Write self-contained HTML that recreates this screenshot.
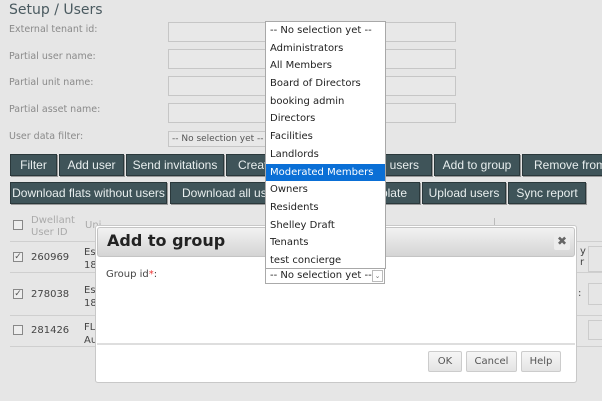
<!DOCTYPE html>
<html><head><style>
*{box-sizing:border-box;margin:0;padding:0}
body{width:602px;height:401px;overflow:hidden;background:#e6e6e6;font-family:"DejaVu Sans","Liberation Sans",sans-serif;position:relative}
.a{position:absolute}
.lbl{position:absolute;left:9px;font-size:9.5px;color:#8a8a8a}
.inp{position:absolute;left:168px;width:288px;height:20px;border:1px solid #c6c6c6;background:#e8e8e8}
.btn{position:absolute;height:22px;background:#3f5459;color:#e8eeee;font-size:12px;line-height:21px;text-align:center;border:1px solid #2a383b;box-shadow:1px 1px 0 #999;font-family:"Liberation Sans",sans-serif;white-space:nowrap;overflow:hidden}
.dd{position:absolute;left:265px;top:21px;width:121px;height:248px;background:#fff;border:1px solid #a8a8a8;font-size:10px;color:#222}
.dd div{height:17.7px;line-height:17.7px;padding-left:4px;white-space:nowrap;overflow:hidden}
.dd .sel{background:#0a6fd6;color:#fff}
.line{position:absolute;left:10px;width:592px;height:1px;background:#cfcfcf}
.cb{position:absolute;left:13px;width:10px;height:10px;border:1px solid #888;background:#eee;font-size:9px;line-height:8px;text-align:center;color:#555}
.td{position:absolute;left:31px;font-size:10px;color:#444}
.dbtn{position:absolute;top:351px;height:21px;border:1px solid #ccc;border-radius:2px;background:linear-gradient(#f6f6f6,#e4e4e4);font-size:10px;color:#555;text-align:center;line-height:19px}
</style></head><body>
<div class="a" style="left:9px;top:2px;font-size:14px;color:#4a5a60">Setup / Users</div>
<div class="lbl" style="top:24px">External tenant id:</div>
<div class="lbl" style="top:51px">Partial user name:</div>
<div class="lbl" style="top:77px">Partial unit name:</div>
<div class="lbl" style="top:104px">Partial asset name:</div>
<div class="lbl" style="top:131px">User data filter:</div>
<div class="inp" style="top:22px"></div>
<div class="inp" style="top:49px"></div>
<div class="inp" style="top:76px"></div>
<div class="inp" style="top:103px"></div>
<div class="inp" style="top:131px;height:16px;width:100px;font-size:9px;color:#555;padding-left:3px;line-height:14px;white-space:nowrap;overflow:hidden">-- No selection yet --</div>

<div class="btn" style="left:10px;top:154px;width:47px">Filter</div>
<div class="btn" style="left:59px;top:154px;width:65px">Add user</div>
<div class="btn" style="left:126px;top:154px;width:98px">Send invitations</div>
<div class="btn" style="left:226px;top:154px;width:80px;text-align:left;padding-left:11px">Create</div>
<div class="btn" style="left:330px;top:154px;width:102px;text-align:right;padding-right:12px">e users</div>
<div class="btn" style="left:434px;top:154px;width:86px">Add to group</div>
<div class="btn" style="left:522px;top:154px;width:90px;text-align:left;padding-left:11px">Remove from g</div>

<div class="btn" style="left:10px;top:182px;width:157px">Download flats without users</div>
<div class="btn" style="left:170px;top:182px;width:100px;text-align:left;padding-left:11px">Download all users</div>
<div class="btn" style="left:360px;top:182px;width:60px;text-align:right;padding-right:12px">plate</div>
<div class="btn" style="left:422px;top:182px;width:84px">Upload users</div>
<div class="btn" style="left:508px;top:182px;width:78px">Sync report</div>

<div class="cb" style="top:220px"></div>
<div class="td" style="left:31px;top:215px;color:#aaa;line-height:12px">Dwellant<br>User ID</div>
<div class="a" style="left:85px;top:220px;font-size:10px;color:#aaa">Uni</div>
<div class="line" style="top:241px"></div>
<div class="cb" style="top:252px">✓</div><div class="td" style="top:252px">260969</div>
<div class="a" style="left:84px;top:246px;font-size:10px;color:#444;line-height:13px">Es<br>18</div>
<div class="line" style="top:272px"></div>
<div class="cb" style="top:289px">✓</div><div class="td" style="top:289px">278038</div>
<div class="a" style="left:84px;top:284px;font-size:10px;color:#444;line-height:13px">Es<br>18</div>
<div class="line" style="top:315px"></div>
<div class="cb" style="top:325px"></div><div class="td" style="top:325px">281426</div>
<div class="a" style="left:84px;top:321px;font-size:10px;color:#444;line-height:13px">FL<br>Au</div>
<div class="line" style="top:346px"></div>
<div class="a" style="left:580px;top:246px;font-size:10px;color:#444;line-height:11px">y<br>r</div>
<div class="a" style="left:578px;top:288px;font-size:10px;color:#444">:</div>
<div class="a" style="left:588px;top:246px;width:20px;height:26px;border:1px solid #ccc"></div>
<div class="a" style="left:588px;top:283px;width:20px;height:22px;border:1px solid #ccc"></div>
<div class="a" style="left:588px;top:320px;width:20px;height:20px;border:1px solid #ccc"></div>
<div class="a" style="left:380px;top:218px;width:115px;height:12px;border:1px solid #bbb;border-top:none;border-left:none"></div>

<div class="a" style="left:95px;top:225px;width:482px;height:158px;background:#fff;border:1px solid #c8c8c8;border-radius:3px"></div>
<div class="a" style="left:97px;top:227px;width:478px;height:30px;background:linear-gradient(#f2f2f2,#d4d4d4);border:1px solid #c4c4c4;border-radius:3px"></div>
<div class="a" style="left:107px;top:231px;font-size:16px;font-weight:bold;color:#222">Add to group</div>
<div class="a" style="left:554px;top:233px;width:16px;height:17px;background:#ececec;border-radius:2px;color:#666;font-size:12px;line-height:17px;text-align:center;font-weight:bold">✖</div>
<div class="a" style="left:106px;top:269px;font-size:10px;color:#444">Group id<span style="color:#e33">*</span>:</div>
<div class="a" style="left:97px;top:343px;width:478px;height:2px;background:#dedede"></div>
<div class="dbtn" style="left:428px;width:34px">OK</div>
<div class="dbtn" style="left:466px;width:51px">Cancel</div>
<div class="dbtn" style="left:521px;width:40px">Help</div>

<div class="a" style="left:265px;top:268px;width:120px;height:16px;border:1px solid #aaa;background:#fff;font-size:10px;color:#222;line-height:14px;padding-left:4px;white-space:nowrap;overflow:hidden">-- No selection yet --<span style="position:absolute;right:1px;top:1px;width:11px;height:12px;border:1px solid #bbb;background:#fff;font-size:7px;line-height:11px;text-align:center;color:#777">⌄</span></div>

<div class="dd">
<div>-- No selection yet --</div><div>Administrators</div><div>All Members</div><div>Board of Directors</div><div>booking admin</div><div>Directors</div><div>Facilities</div><div>Landlords</div><div class="sel">Moderated Members</div><div>Owners</div><div>Residents</div><div>Shelley Draft</div><div>Tenants</div><div>test concierge</div>
</div>
</body></html>
